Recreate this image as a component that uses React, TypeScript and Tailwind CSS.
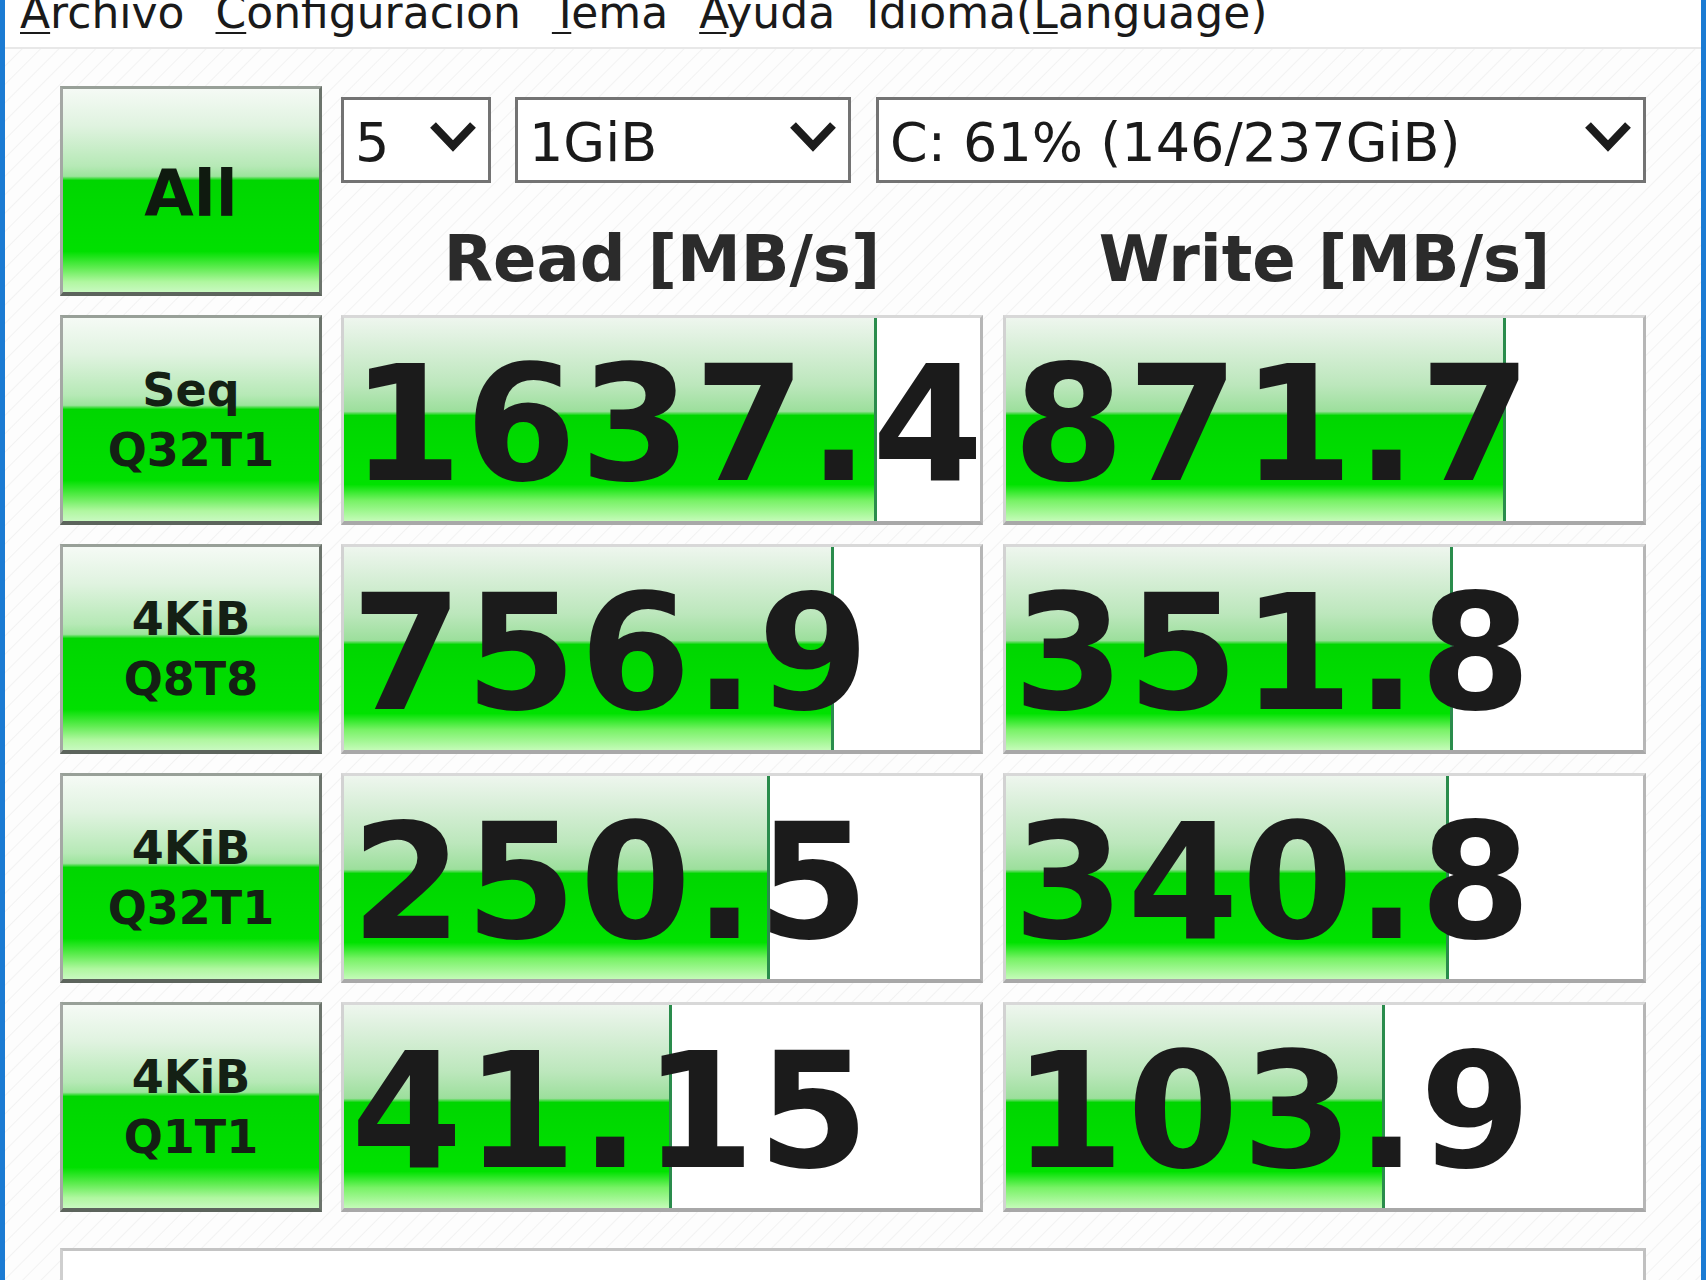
import React from "react";

type Row = { l1: string; l2: string; r: string; rw: number; w: string; ww: number };

const rows: Row[] = [
  { l1: "Seq", l2: "Q32T1", r: "1637.4", rw: 533, w: "871.7", ww: 500 },
  { l1: "4KiB", l2: "Q8T8", r: "756.9", rw: 490, w: "351.8", ww: 447 },
  { l1: "4KiB", l2: "Q32T1", r: "250.5", rw: 426, w: "340.8", ww: 443 },
  { l1: "4KiB", l2: "Q1T1", r: "41.15", rw: 328, w: "103.9", ww: 379 },
];

function Chevron() {
  return (
    <svg width="48" height="30" viewBox="0 0 48 30" className="mb-[6px] shrink-0">
      <polyline
        points="4,3 24,24 44,3"
        fill="none"
        stroke="#1c1c1c"
        strokeWidth="8"
        strokeLinejoin="miter"
      />
    </svg>
  );
}

function Dropdown({ text, width }: { text: string; width: string }) {
  return (
    <div
      className={`flex h-[86px] ${width} shrink-0 items-center justify-between border-[3px] border-[#737373] bg-white pl-[11px] pr-[11px]`}
    >
      <span className="whitespace-nowrap pt-[6px] text-[54px] leading-[54px] text-[#1a1a1a]">{text}</span>
      <Chevron />
    </div>
  );
}

function LabelBox({ children, tall }: { children: React.ReactNode; tall?: boolean }) {
  return (
    <div
      className={`flex h-[210px] w-[262px] shrink-0 flex-col items-center justify-center border-[3px] border-b-4 border-t-[#98a098] border-l-[#a4a8a4] border-r-[#6c746c] border-b-[#5c645c] bg-[linear-gradient(to_bottom,#f5faf5_0%,#e0f3e0_18%,#b6e9b6_38%,#9ce49c_43%,#00d600_45%,#00e000_80%,#5eec50_88%,#b0f7a0_95%,#c8f9c0_100%)] font-bold text-[#142014] ${
        tall ? "" : ""
      }`}
    >
      {children}
    </div>
  );
}

function ResultBox({ value, bar, wide }: { value: string; bar: number; wide: boolean }) {
  return (
    <div
      className={`relative flex h-[210px] ${
        wide ? "w-[643px]" : "w-[642px]"
      } shrink-0 items-center border-[3px] border-b-4 border-t-[#d8d8d8] border-l-[#d2d2d2] border-r-[#b6b6b6] border-b-[#a8a8a8] bg-white`}
    >
      <div
        className="absolute inset-y-0 left-0 border-r-[3px] border-r-[#2a8c4c] bg-[linear-gradient(to_bottom,#eef6ee_0%,#dcf0dc_12%,#bce7bc_33%,#9cdf9c_46%,#00d600_48%,#00e200_82%,#78f266_90%,#c4fbb8_100%)]"
        style={{ width: `${bar}px` }}
      />
      <span className="relative whitespace-nowrap pl-[7px] pt-[10px] text-[160px] font-bold leading-[160px] tracking-[3px] text-[#1b1b1b]">
        {value}
      </span>
    </div>
  );
}

export default function App() {
  return (
    <div className="flex h-[1280px] w-[1706px] overflow-hidden bg-white font-['DejaVu_Sans',sans-serif] text-[#1a1a1a]">
      <div className="w-[5px] shrink-0 bg-[#1b7bd3]" />
      <div className="flex min-w-0 flex-1 flex-col">
        <nav className="flex h-[49px] shrink-0 gap-[31px] border-b-2 border-[#e8e8e8] bg-white pl-[15px] text-[44px] leading-[26px] text-[#1a1a1a]">
          <span>
            <span className="underline decoration-2 underline-offset-[4px]">A</span>rchivo
          </span>
          <span>
            <span className="underline decoration-2 underline-offset-[4px]">C</span>onfiguracion
          </span>
          <span>
            <span className="underline decoration-2 underline-offset-[4px]">T</span>ema
          </span>
          <span>
            <span className="underline decoration-2 underline-offset-[4px]">A</span>yuda
          </span>
          <span>
            Idioma(<span className="underline decoration-2 underline-offset-[4px]">L</span>anguage)
          </span>
        </nav>
        <main className="flex-1 bg-[repeating-linear-gradient(135deg,#fdfdfd_0px,#fdfdfd_11px,#f2f2f2_12px,#fdfdfd_13px)] pl-[55px] pt-[37px]">
          <div className="flex gap-[19px]">
            <div className="flex h-[210px] w-[262px] shrink-0 items-center justify-center border-[3px] border-b-4 border-t-[#98a098] border-l-[#a4a8a4] border-r-[#6c746c] border-b-[#5c645c] bg-[linear-gradient(to_bottom,#f5faf5_0%,#e0f3e0_18%,#b6e9b6_38%,#9ce49c_43%,#00d600_45%,#00e000_80%,#5eec50_88%,#b0f7a0_95%,#c8f9c0_100%)]">
              <span className="pt-[6px] text-[64px] font-bold leading-[64px] text-[#0f1a0f]">All</span>
            </div>
            <div className="flex w-[1305px] flex-col">
              <div className="mt-[11px] flex">
                <Dropdown text="5" width="w-[150px]" />
                <div className="ml-[24px]">
                  <Dropdown text="1GiB" width="w-[336px]" />
                </div>
                <div className="ml-[25px]">
                  <Dropdown text="C: 61% (146/237GiB)" width="w-[770px]" />
                </div>
              </div>
              <div className="mt-[44px] flex gap-[20px] text-[64px] font-bold leading-[64px] text-[#2b2b2b]">
                <div className="w-[642px] whitespace-nowrap text-center">Read [MB/s]</div>
                <div className="w-[643px] whitespace-nowrap text-center">Write [MB/s]</div>
              </div>
            </div>
          </div>

          {rows.map((row, i) => (
            <div key={i} className="mt-[19px] flex">
              <LabelBox>
                <span className="text-[46px] leading-[60px]">{row.l1}</span>
                <span className="text-[46px] leading-[60px]">{row.l2}</span>
              </LabelBox>
              <div className="ml-[19px]">
                <ResultBox value={row.r} bar={row.rw} wide={false} />
              </div>
              <div className="ml-[20px]">
                <ResultBox value={row.w} bar={row.ww} wide={true} />
              </div>
            </div>
          ))}

          <div className="mt-[36px] h-[120px] w-[1586px] border-[3px] border-t-[#c4c4c4] border-l-[#cfcfcf] border-r-[#c0c0c0] border-b-0 bg-white" />
        </main>
      </div>
      <div className="w-[5px] shrink-0 bg-[#1b7bd3]" />
    </div>
  );
}
